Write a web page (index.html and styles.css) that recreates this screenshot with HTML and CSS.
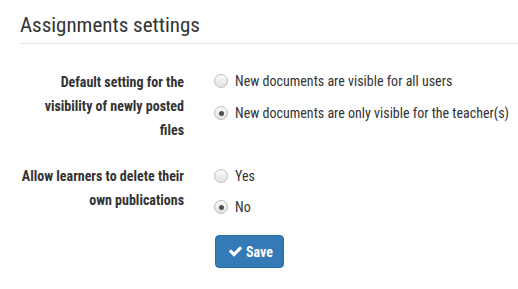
FILE: index.html
```html
<!DOCTYPE html>
<html lang="en">
<head>
    <meta charset="UTF-8">
    <meta name="viewport" content="width=device-width, initial-scale=1.0">
    <title>Assignments settings</title>
    <link rel="stylesheet" href="styles.css">
</head>
<body>
    <div id="container">
        <h3 class="page-title">Assignments settings</h3>

        <form class="settings">
            <div class="form-row">
                <div class="row-label">Default setting for the visibility of newly posted files</div>
                <div class="options">
                    <label class="option">
                        <input type="radio" name="visibility" value="all">
                        <span>New documents are visible for all users</span>
                    </label>
                    <label class="option">
                        <input type="radio" name="visibility" value="teacher" checked>
                        <span>New documents are only visible for the teacher(s)</span>
                    </label>
                </div>
            </div>

            <div class="form-row second">
                <div class="row-label">Allow learners to delete their own publications</div>
                <div class="options">
                    <label class="option">
                        <input type="radio" name="delete" value="yes">
                        <span>Yes</span>
                    </label>
                    <label class="option">
                        <input type="radio" name="delete" value="no" checked>
                        <span>No</span>
                    </label>
                </div>
            </div>

            <div class="actions">
                <button type="button" class="btn-save">
                    <svg width="13" height="11" viewBox="0 0 1550 1188" fill="#fff">
                        <path d="M1550 232q0 40-28 68l-724 724-136 136q-28 28-68 28t-68-28l-136-136-362-362q-28-28-28-68t28-68l136-136q28-28 68-28t68 28l294 295 656-657q28-28 68-28t68 28l136 136q28 28 28 68z"/>
                    </svg>
                    Save
                </button>
            </div>
        </form>
    </div>
</body>
</html>
```

FILE: styles.css
```css
body {
    margin: 0;
    font-family: "Roboto Condensed", Roboto, "Liberation Sans", sans-serif;
    color: #333;
    background: #fff;
}

#container {
    padding: 13px 0 0 20px;
}

.page-title {
    margin: 0;
    font-size: 21px;
    font-weight: 400;
    line-height: 24px;
    padding-bottom: 6px;
    border-bottom: 1px solid #e5e5e5;
}

.settings {
    padding-top: 26px;
}

.form-row {
    display: grid;
    grid-template-columns: 164px 1fr;
    column-gap: 30px;
}

.form-row.second {
    margin-top: 22px;
}

.row-label {
    text-align: right;
    font-size: 14px;
    font-weight: 700;
    line-height: 24px;
}

.options {
    display: flex;
    flex-direction: column;
    gap: 12px;
    padding-top: 1px;
}

.second .options {
    gap: 11px;
    padding-top: 2px;
}

.option {
    display: flex;
    align-items: center;
    height: 20px;
    font-size: 14px;
    cursor: pointer;
}

.option input {
    appearance: none;
    -webkit-appearance: none;
    width: 14px;
    height: 14px;
    margin: 0 7px 0 0;
    border: 1px solid #bdbdbd;
    border-radius: 50%;
    background: linear-gradient(#fbfbfb, #e2e2e2);
    box-sizing: border-box;
    position: relative;
}

.option input:checked::after {
    content: "";
    position: absolute;
    left: 3.5px;
    top: 3.5px;
    width: 5px;
    height: 5px;
    border-radius: 50%;
    background: #505050;
}

.actions {
    margin-top: 18px;
    padding-left: 195px;
}

.btn-save {
    display: flex;
    align-items: center;
    gap: 4px;
    height: 33px;
    width: 69px;
    padding: 0 0 0 13px;
    font-family: inherit;
    font-size: 14px;
    font-weight: 700;
    color: #fff;
    background-color: #337ab7;
    border: 1px solid #2e6da4;
    border-radius: 4px;
    cursor: pointer;
}
```
